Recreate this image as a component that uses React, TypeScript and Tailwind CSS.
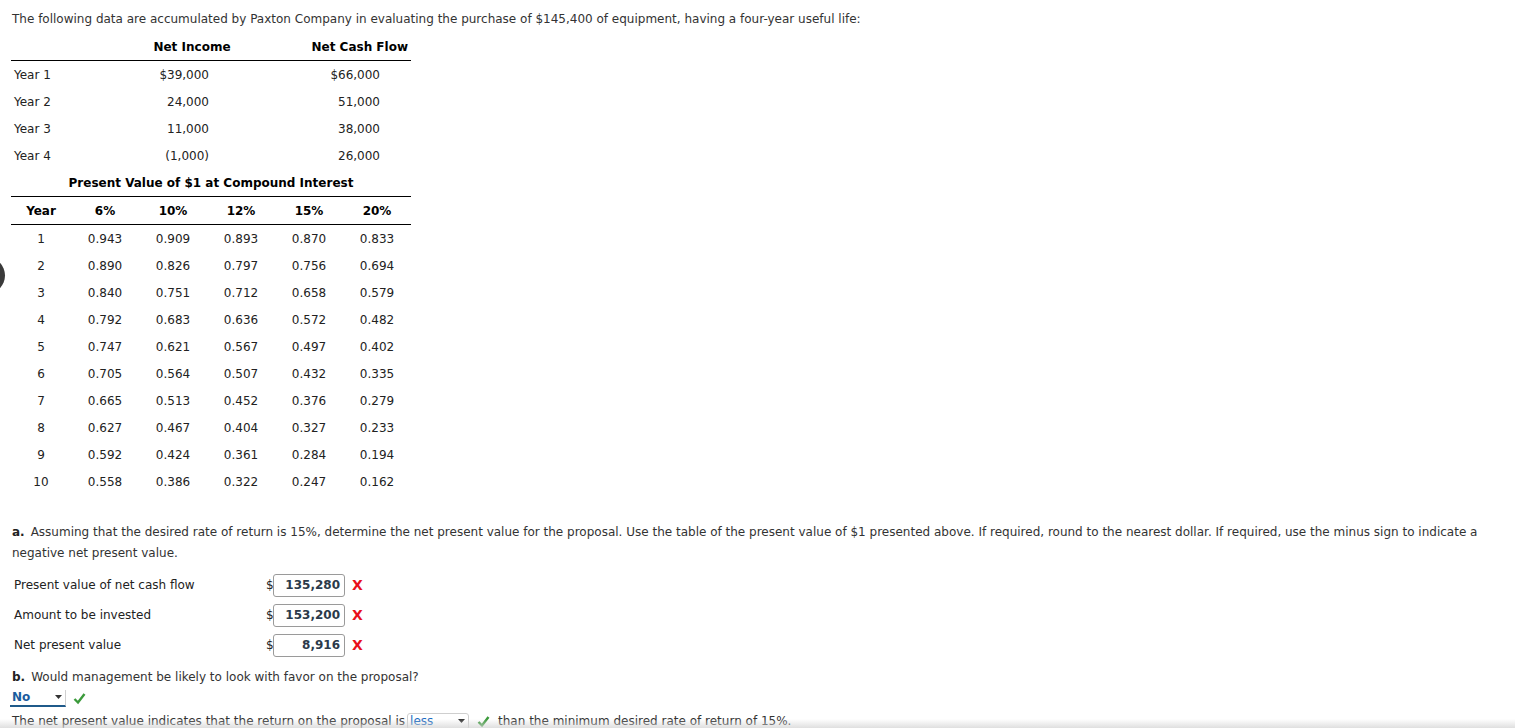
const incomeRows = [
  { year: 'Year 1', income: '$39,000', cash: '$66,000' },
  { year: 'Year 2', income: '24,000', cash: '51,000' },
  { year: 'Year 3', income: '11,000', cash: '38,000' },
  { year: 'Year 4', income: '(1,000)', cash: '26,000' },
]

const rates = ['6%', '10%', '12%', '15%', '20%']

const pvTable = [
  ['0.943', '0.909', '0.893', '0.870', '0.833'],
  ['0.890', '0.826', '0.797', '0.756', '0.694'],
  ['0.840', '0.751', '0.712', '0.658', '0.579'],
  ['0.792', '0.683', '0.636', '0.572', '0.482'],
  ['0.747', '0.621', '0.567', '0.497', '0.402'],
  ['0.705', '0.564', '0.507', '0.432', '0.335'],
  ['0.665', '0.513', '0.452', '0.376', '0.279'],
  ['0.627', '0.467', '0.404', '0.327', '0.233'],
  ['0.592', '0.424', '0.361', '0.284', '0.194'],
  ['0.558', '0.386', '0.322', '0.247', '0.162'],
]

const answers = [
  { label: 'Present value of net cash flow', value: '135,280' },
  { label: 'Amount to be invested', value: '153,200' },
  { label: 'Net present value', value: '8,916' },
]

function Check() {
  return (
    <svg width="13" height="13" viewBox="0 0 13 13" className="shrink-0">
      <path d="M1.5 7 L5 10.5 L11.5 2" fill="none" stroke="#3b9a3b" strokeWidth="2.4" />
    </svg>
  )
}

function Caret() {
  return (
    <svg width="7" height="4" viewBox="0 0 7 4" className="shrink-0">
      <path d="M0 0 H7 L3.5 4 Z" fill="#333" />
    </svg>
  )
}

export default function App() {
  return (
    <div className="relative min-h-[728px] overflow-hidden bg-white font-['DejaVu_Sans',Verdana,sans-serif] text-[12px] text-[#333]">
      {/* stray round handle on the left edge */}
      <div className="absolute left-[-32px] top-[257px] h-[37px] w-[37px] rounded-full bg-[#3a3a3a]" />

      <div className="px-[12px] pt-[9px]">
        <p className="leading-[20px]">
          The following data are accumulated by Paxton Company in evaluating the purchase of $145,400 of
          equipment, having a four-year useful life:
        </p>

        {/* Net income / cash flow */}
        <div className="mt-[5px] w-[400px] -ml-[1px] text-[#222]">
          <div className="grid h-[27px] grid-cols-[131px_100px_169px] items-center border-b border-black font-bold text-black">
            <div />
            <div className="text-center">Net Income</div>
            <div className="pr-[3px] text-right">Net Cash Flow</div>
          </div>
          {incomeRows.map(r => (
            <div key={r.year} className="grid h-[27px] grid-cols-[131px_100px_169px] items-center">
              <div className="pl-[3px]">{r.year}</div>
              <div className="pr-[33px] text-right">{r.income}</div>
              <div className="pr-[31px] text-right">{r.cash}</div>
            </div>
          ))}

          {/* Present value table */}
          <div className="flex h-[28px] items-center justify-center border-b border-black font-bold text-black">
            Present Value of $1 at Compound Interest
          </div>
          <div className="grid h-[28px] grid-cols-[60px_repeat(5,68px)] items-center border-b border-black text-center font-bold text-black">
            <div>Year</div>
            {rates.map(r => (
              <div key={r}>{r}</div>
            ))}
          </div>
          {pvTable.map((row, i) => (
            <div key={i} className="grid h-[27px] grid-cols-[60px_repeat(5,68px)] items-center text-center">
              <div>{i + 1}</div>
              {row.map((v, j) => (
                <div key={j}>{v}</div>
              ))}
            </div>
          ))}
        </div>

        {/* Part a */}
        <p className="mt-[27px] leading-[21px]">
          <b className="mr-[6px] text-[#222]">a.</b>
          <span>
            Assuming that the desired rate of return is 15%, determine the net present value for the proposal. Use
            the table of the present value of $1 presented above. If required, round to the nearest dollar. If
            required, use the minus sign to indicate a negative net present value.
          </span>
        </p>

        <div className="mt-[6px] flex flex-col">
          {answers.map(a => (
            <div key={a.label} className="flex h-[30px] items-center">
              <div className="w-[254px] pl-[2px] text-[#222]">{a.label}</div>
              <span className="w-[7px] text-[#222]">$</span>
              <div className="flex h-[23px] w-[72px] items-center justify-end rounded-[3px] border border-[#9a9a9a] pr-[4px] font-bold text-[#2b3a4a]">
                {a.value}
              </div>
              <span className="ml-[7px] font-bold text-[14px] text-[#e8101a]">X</span>
            </div>
          ))}
        </div>

        {/* Part b */}
        <p className="mt-[7px] leading-[20px]">
          <b className="mr-[6px] text-[#222]">b.</b>
          <span>Would management be likely to look with favor on the proposal?</span>
        </p>
        <div className="mt-[1px] flex h-[20px] items-center gap-[7px] -ml-[2px]">
          <div className="flex h-[17px] w-[56px] items-center justify-between border-b-2 border-r border-[#1f5a8a] border-r-[#d0d0d0] pl-[2px] pr-[3px]">
            <span className="font-bold text-[#1b5c9e]">No</span>
            <Caret />
          </div>
          <Check />
        </div>
        <div className="mt-[3px] flex h-[20px] items-center -ml-[2px]">
          <span className="pl-[2px]">The net present value indicates that the return on the proposal is</span>
          <div className="ml-[2px] flex h-[17px] w-[62px] items-center justify-between rounded-[3px] border border-[#cfcfcf] pl-[2px] pr-[3px]">
            <span className="text-[#1b6cc2]">less</span>
            <Caret />
          </div>
          <span className="ml-[8px]"><Check /></span>
          <span className="ml-[8px]">than the minimum desired rate of return of 15%.</span>
        </div>
      </div>

      {/* bottom shade */}
      <div className="absolute bottom-0 left-0 right-0 h-[12px] bg-linear-to-b from-white/0 to-[#d4d4d4]" />
    </div>
  )
}
